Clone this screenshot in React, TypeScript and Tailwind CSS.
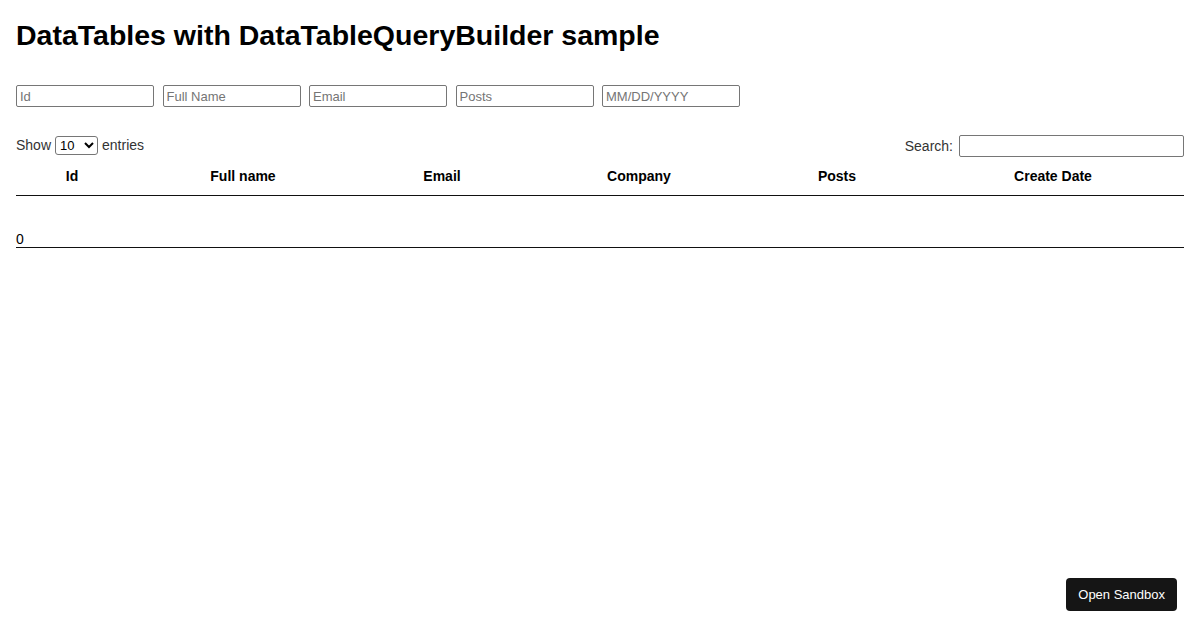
import React from "react";

const filters = ["Id", "Full Name", "Email", "Posts", "MM/DD/YYYY"];

const columns = [
  { label: "Id", w: "w-[112px]" },
  { label: "Full name", w: "w-[230px]" },
  { label: "Email", w: "w-[168px]" },
  { label: "Company", w: "w-[226px]" },
  { label: "Posts", w: "w-[170px]" },
  { label: "Create Date", w: "w-[262px]" },
];

export default function App() {
  return (
    <div className="relative min-h-[630px] bg-white px-4 font-['Liberation_Sans',Arial,sans-serif] text-black">
      <h1 className="pt-[17px] text-[28.5px] font-bold leading-[36px]">
        DataTables with DataTableQueryBuilder sample
      </h1>

      {/* column filters */}
      <div className="mt-[32px] flex gap-[8.5px]">
        {filters.map((f) => (
          <input
            key={f}
            placeholder={f}
            className="h-[22px] w-[138px] rounded-[2px] border border-[#767676] px-[3px] text-[13px] placeholder:text-[#757575] outline-none"
          />
        ))}
      </div>

      {/* length + search */}
      <div className="mt-[27px] flex items-center justify-between text-[14px] text-[#333]">
        <div className="flex items-center gap-[4px]">
          <span>Show</span>
          <select className="h-[19px] w-[43px] rounded-[3px] border border-[#767676] bg-white text-[13px] text-black">
            <option>10</option>
          </select>
          <span>entries</span>
        </div>
        <div className="mt-[1px] flex items-center gap-[6px]">
          <span>Search:</span>
          <input className="h-[22px] w-[225px] rounded-[2px] border border-[#767676] outline-none" />
        </div>
      </div>

      {/* table */}
      <div className="mt-[9px] w-[1168px] text-[14px]">
        <div className="flex border-b border-[#111] pb-[8px]">
          {columns.map((c) => (
            <div key={c.label} className={`${c.w} text-center font-bold`}>
              {c.label}
            </div>
          ))}
        </div>
        <div className="flex h-[52px] items-end border-b border-[#111] leading-[16px]">
          <span>0</span>
        </div>
      </div>

      <button className="absolute bottom-[19px] right-[23px] h-[33px] rounded-[4px] bg-[#151515] px-[12px] text-[13px] text-white">
        Open Sandbox
      </button>
    </div>
  );
}
